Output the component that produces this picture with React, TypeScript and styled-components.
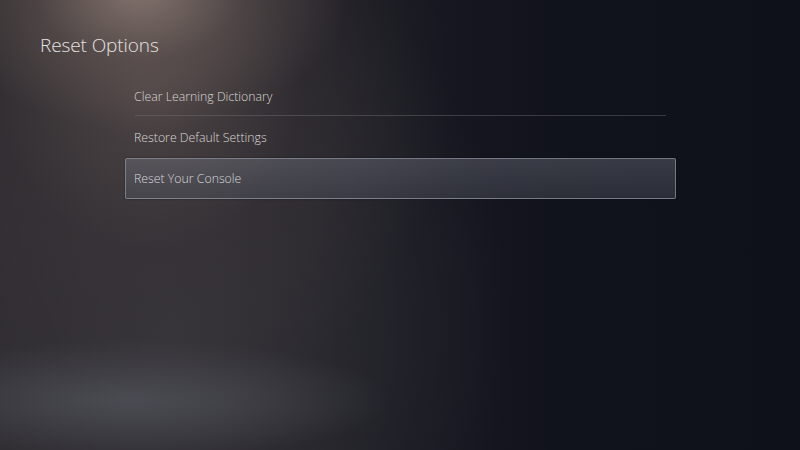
import React from 'react'
import styled, { createGlobalStyle } from 'styled-components'

const GlobalStyle = createGlobalStyle`
  html, body {
    margin: 0;
    padding: 0;
    background: #10121b;
  }
  body {
    font-family: 'Open Sans', 'Liberation Sans', sans-serif;
  }
`

const Screen = styled.div`
  position: relative;
  width: 800px;
  height: 450px;
  overflow: hidden;
  background:
    radial-gradient(ellipse 210px 140px at 140px -10px, rgba(160, 140, 130, 0.7) 0%, rgba(120, 104, 98, 0.35) 50%, transparent 100%),
    radial-gradient(ellipse 300px 320px at 150px 90px, rgba(92, 80, 78, 0.7) 0%, rgba(60, 54, 56, 0.4) 50%, transparent 100%),
    radial-gradient(ellipse 260px 60px at 130px 400px, rgba(88, 90, 98, 0.65) 0%, transparent 100%),
    radial-gradient(ellipse 340px 420px at 170px 330px, rgba(58, 56, 62, 0.85) 0%, transparent 100%),
    linear-gradient(90deg, #29262b 0%, #211f26 30%, #181921 50%, #11131c 70%, #0e101a 100%);
  padding: 33px 0 0 40px;
  box-sizing: border-box;
`

const Title = styled.h1`
  margin: 0;
  font-size: 19px;
  font-weight: 300;
  color: #e4e2e2;
  letter-spacing: -0.1px;
  line-height: 24px;
`

const Menu = styled.div`
  display: flex;
  flex-direction: column;
  width: 551px;
  margin: 19px 0 0 85px;
`

const Item = styled.div<{ $active?: boolean; $divider?: boolean }>`
  position: relative;
  height: 41px;
  display: flex;
  align-items: center;
  padding: 0 8px;
  font-size: 12.3px;
  font-weight: 300;
  color: ${p => (p.$active ? '#d6d7da' : '#dad7d6')};
  box-sizing: border-box;
  border: 1px solid ${p => (p.$active ? 'rgba(140, 145, 158, 0.75)' : 'transparent')};
  border-radius: 2px;
  background: ${p =>
    p.$active
      ? 'linear-gradient(180deg, rgba(118, 122, 134, 0.4) 0%, rgba(84, 88, 100, 0.4) 100%)'
      : 'transparent'};
  box-shadow: ${p => (p.$active ? '0 0 2px rgba(0,0,0,0.5)' : 'none')};

  &::after {
    content: '';
    display: ${p => (p.$divider ? 'block' : 'none')};
    position: absolute;
    left: 9px;
    right: 9px;
    bottom: 0;
    height: 1px;
    background: rgba(120, 118, 124, 0.4);
  }
`

const items = [
  { label: 'Clear Learning Dictionary', divider: true },
  { label: 'Restore Default Settings' },
  { label: 'Reset Your Console', active: true },
]

export default function App() {
  return (
    <>
      <GlobalStyle />
      <Screen>
        <Title>Reset Options</Title>
        <Menu>
          {items.map(it => (
            <Item key={it.label} $active={it.active} $divider={it.divider}>
              {it.label}
            </Item>
          ))}
        </Menu>
      </Screen>
    </>
  )
}
